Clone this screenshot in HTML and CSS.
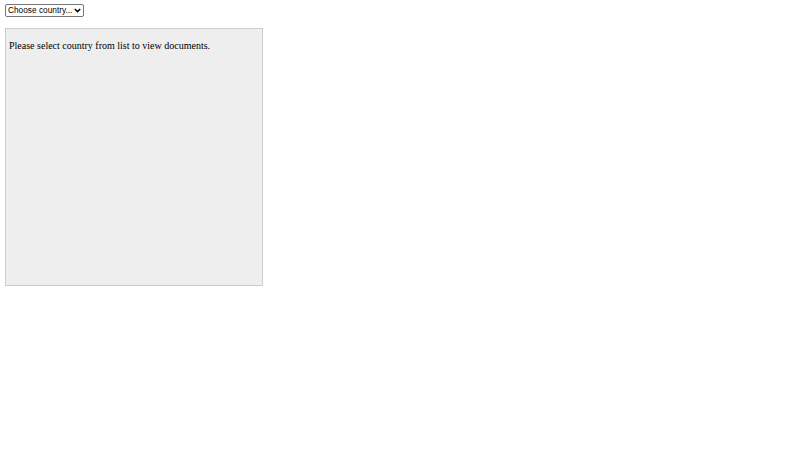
FILE: index.html
```html
<!DOCTYPE html>
<html>
<head>
<meta charset="utf-8">
<link rel="stylesheet" href="styles.css">
</head>
<body>
<div class="page">
  <select class="country">
    <option>Choose country...</option>
  </select>
  <div class="docs">
    <p class="msg">Please select country from list to view documents.</p>
  </div>
</div>
</body>
</html>
```
FILE: styles.css
```css
body {
  margin: 0;
  font-family: "Liberation Serif", serif;
}
.page {
  padding: 4px 5px;
  display: flex;
  flex-direction: column;
  align-items: flex-start;
  gap: 11px;
}
.country {
  appearance: none;
  -webkit-appearance: none;
  font-family: "Liberation Sans", Arial, sans-serif;
  font-size: 8.3px;
  color: #000;
  height: 13px;
  width: 79px;
  margin: 0;
  padding: 0 8px 0 2px;
  border: 1px solid #767676;
  border-radius: 2px;
  background-color: #fff;
  background-image: url("data:image/svg+xml,%3Csvg xmlns='http://www.w3.org/2000/svg' width='7' height='5' viewBox='0 0 7 5'%3E%3Cpath d='M0.8 1 L3.5 3.6 L6.2 1' fill='none' stroke='%23000' stroke-width='1.5'/%3E%3C/svg%3E");
  background-repeat: no-repeat;
  background-position: right 2px center;
  background-size: 7px 5px;
  line-height: 11px;
}
.docs {
  width: 250px;
  height: 250px;
  padding: 3px;
  background: #eeeeee;
  border: 1px solid #cccccc;
}
.msg {
  margin: 8px 0 0 0;
  font-size: 10px;
}
```
